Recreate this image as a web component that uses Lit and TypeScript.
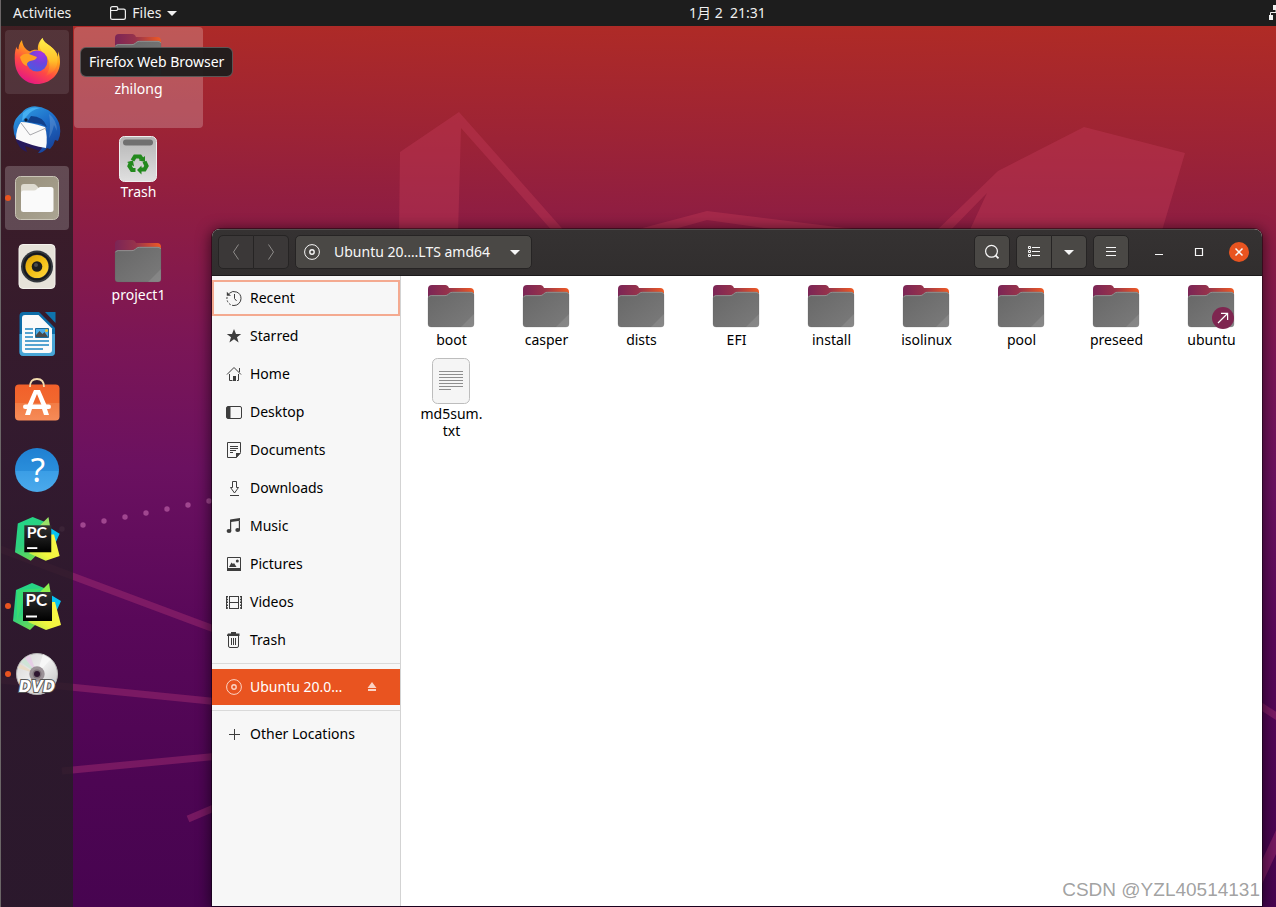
import { LitElement, html, css, svg, SVGTemplateResult } from "lit";
import { customElement, property } from "lit/decorators.js";
import { classMap } from "lit/directives/class-map.js";

/* ---------- symbolic 16px icons ---------- */

const symbolic: Record<string, SVGTemplateResult> = {
  recent: svg`<g fill="none" stroke="currentColor"><path d="M3.2 3.4A7 7 0 0 1 15 8.500 7 7 0 0 1 8 15.500"/><path stroke-dasharray="2 1.500" d="M8 15.500A7 7 0 0 1 1.200 6.500"/><path d="M8.500 4v4.500l2 2.400"/></g><path fill="currentColor" d="M.8 1.800v4H5z"/>`,
  starred: svg`<path fill="currentColor" d="M8 1l2 5h5.200l-4.200 3.200 1.600 5.300L8 11.300l-4.600 3.200L5 9.200.8 6H6z"/>`,
  home: svg`<g fill="none" stroke="currentColor"><path d="M1 8.500l7-7 7 7"/><path d="M3.500 8v6.500h3M12.500 8v6.500h-1.500M13.500 2v4"/></g><path fill="currentColor" d="M7 10h3v5H7z"/>`,
  desktop: svg`<rect x=".5" y="2.500" width="15" height="12" rx="1.500" fill="none" stroke="currentColor"/><path fill="currentColor" d="M1 3h3.500v11H1z"/>`,
  documents: svg`<g fill="none" stroke="currentColor"><path d="M1.500.5h13v10l-4 5h-9z"/><path d="M4 4.500h8M4 6.500h8M4 8.500h6M4 10.500h3"/></g><path fill="currentColor" d="M10 11h5l-5 5z"/>`,
  downloads: svg`<g fill="none" stroke="currentColor"><path d="M6.500 1.500h4v6h2L8.500 13l-4-5.500h2z"/><path d="M4 15.500h9"/></g>`,
  music: svg`<path fill="currentColor" d="M4 1.500L14 0v2.800L5 4zM4 2h1.200v11H4zM12.800 2H14v10h-1.200z"/><ellipse cx="3" cy="13" rx="2.400" ry="2" fill="currentColor"/><ellipse cx="11.700" cy="12" rx="2.400" ry="2" fill="currentColor"/>`,
  pictures: svg`<path fill="none" stroke="currentColor" d="M1.500 1.500h13v12h-13z"/><path fill="currentColor" d="M1 12h14v3H1zM3 11l2.500-4.500L7 8l1-1 2.500 4z"/><circle cx="11.300" cy="5" r="1.500" fill="currentColor"/>`,
  videos: svg`<g fill="none" stroke="currentColor"><path d="M3.500 2v13M12.500 2v13M3 2.500h10M3 8.500h10M3 14.500h10"/><path stroke-width="2" stroke-dasharray="1.500 1.300" d="M1 2v13M15 2v13"/><path d="M.5 2v13M15.500 2v13"/></g>`,
  trash: svg`<path fill="currentColor" d="M5 0h5v1.500h3.500V4H1V3l1-1.500h3z"/><g fill="none" stroke="currentColor"><path d="M2.500 4v10q0 1.500 1.500 1.500h7q1.500 0 1.500-1.500V4"/><path d="M5.500 6v7M7.500 6v7M9.500 6v7"/></g>`,
  disc: svg`<g fill="none" stroke="currentColor"><circle cx="8" cy="8" r="7.400"/><circle cx="8" cy="8" r="2.200" stroke-width="1.400"/></g>`,
  plus: svg`<path fill="none" stroke="currentColor" d="M8.500 3v11M3 8.500h11"/>`,
  eject: svg`<path fill="currentColor" d="M8 3l4.500 6h-9zM4 10h8v2H4z"/>`,
  back: svg`<path fill="none" stroke="currentColor" d="M10.500.5l-5 7.500 5 7.500"/>`,
  forward: svg`<path fill="none" stroke="currentColor" d="M5.500.5l5 7.500-5 7.500"/>`,
  down: svg`<path fill="currentColor" d="M3 6h10l-5 5z"/>`,
  search: svg`<g fill="none" stroke="currentColor" stroke-width="1.200"><circle cx="7.500" cy="7.300" r="5.900"/><path stroke-width="1.800" d="M11.500 11.300l3 3"/></g>`,
  list: svg`<g fill="none" stroke="currentColor"><path d="M2.500 2.500h2v2h-2zM2.500 6.500h2v2h-2zM2.500 10.500h2v2h-2zM6 3.500h8M6 7.500h8M6 11.500h8"/></g>`,
  menu: svg`<path fill="none" stroke="currentColor" d="M3 3.500h10M3 7.500h10M3 11.500h10"/>`,
  minimize: svg`<path fill="currentColor" d="M4 10h8v1H4z"/>`,
  maximize: svg`<path fill="none" stroke="currentColor" stroke-width="1.200" d="M4.500 4.500h7v7h-7z"/>`,
  close: svg`<path fill="none" stroke="currentColor" stroke-width="1.500" d="M4.500 4.500l7 7M11.500 4.500l-7 7"/>`,
  folder: svg`<path fill="none" stroke="currentColor" stroke-width="1.200" d="M.6 12.500v-9Q.6 1.600 2.500 1.600h4q1.200 0 1.200 1.200v1.400h6q1.700 0 1.700 1.700v6.600q0 1.900-1.900 1.900h-11Q.6 14.400.6 12.500zM.6 5.500h6.200l1-1.200"/>`,
  network: svg`<path fill="currentColor" d="M5 0h6v5H5zM1 10h4v5H1zM11 10h4v5h-4z"/><path fill="none" stroke="currentColor" d="M8 4v3.500M2.500 11V7.500h11V11"/>`,
};

const icon = (name: string) =>
  html`<svg class="sym" viewBox="0 0 16 16" aria-hidden="true">${symbolic[name]}</svg>`;

/* ---------- 48px full-colour icons ---------- */

const folderShape = svg`
  <defs>
    <linearGradient id="fb" x1="0" y1="0" x2="1" y2="0"><stop offset="0" stop-color="#7b2556"/><stop offset=".45" stop-color="#97334b"/><stop offset="1" stop-color="#f05a24"/></linearGradient>
    <linearGradient id="ff" x1="0" y1="0" x2="1" y2="1"><stop offset="0" stop-color="#676767"/><stop offset="1" stop-color="#7b7b7b"/></linearGradient>
  </defs>
  <path fill="url(#fb)" d="M1 6q0-4 4-4h13.500q1.800 0 2.700 1.500L22 5h21q4 0 4 4v12H1z"/>
  <path fill="url(#ff)" stroke="#5c5c5c" stroke-opacity=".35" stroke-width=".6" d="M1 15.500q0-3.200 3.200-3.200H18q2 0 3.400-1.300l1-1Q23.500 9 25.500 9H44q3 0 3 3v29q0 3-3 3H4q-3 0-3-3z"/>
  <path fill="none" stroke="#9a9a9a" stroke-width=".8" d="M1.500 14.300q.6-1.700 2.700-1.700H18q2 0 3.400-1.300l1-1q1.100-1 3.100-1H44q2 0 2.700 1.700"/>
  <path fill="#fff" fill-opacity=".1" d="M47 31v10q0 3-3 3H34z"/>`;

const pycharmShape = (bright: boolean) => svg`
  <defs>
    <linearGradient id="pg" x1="0" y1="0" x2=".5" y2="1"><stop offset="0" stop-color="#21d789"/><stop offset=".6" stop-color="${bright ? "#12d9a0" : "#2fd07f"}"/><stop offset="1" stop-color="#6fdc50"/></linearGradient>
    <linearGradient id="py" x1="0" y1="1" x2="1" y2="0"><stop offset="0" stop-color="#a6e84f"/><stop offset=".4" stop-color="#f2f53f"/><stop offset="1" stop-color="#fcf84a"/></linearGradient>
    <linearGradient id="pk" x1="0" y1="0" x2="0" y2="1"><stop offset="0" stop-color="${bright ? "#000" : "#333"}"/><stop offset="1" stop-color="#000"/></linearGradient>
  </defs>
  <path fill="#07c3f2" d="M38 13l10 6-4 9-9 4-17 14-4-4z"/>
  <path fill="url(#pg)" d="M3 8L19 1l12 5 5 4-12 31-7 7L0 39z"/>
  <path fill="${bright ? "#8ff04e" : "#9ae268"}" d="M36 1l2 12H24z"/>
  <path fill="#3fe06a" d="M4 8l28-2-20 8-8 24z" fill-opacity="${bright ? 0.7 : 0}"/>
  <path fill="url(#py)" d="M15 40l18-20 9 0 6 23-15 5z"/>
  <path fill="url(#pk)" d="M10 10h29v29H10z"/>
  <text x="12.500" y="24" class="pc">PC</text>
  <path fill="#fff" d="M13 33.500h11v2H13z"/>`;

const colour: Record<string, SVGTemplateResult> = {
  folder: folderShape,
  link: svg`${folderShape}<circle cx="36" cy="35" r="11" fill="#7e2650"/><path fill="none" stroke="#fff" stroke-width="1.200" d="M31 40l9.500-9.500M34 30.400h6.600v6.600"/>`,
  text: svg`<rect x="5.500" y="1.500" width="37" height="45" rx="5" fill="#f5f5f5" stroke="#bdbdbd"/>
    <path fill="none" stroke="#8e8e8e" d="M12 14.500h24M12 17.500h24M12 20.500h24M12 23.500h24M12 26.500h24M12 29.500h24M12 32.500h12"/>`,
  bin: svg`<defs><linearGradient id="bn" x1="0" y1="0" x2="0" y2="1"><stop offset="0" stop-color="#b5b5b5"/><stop offset="1" stop-color="#e0e0e0"/></linearGradient></defs>
    <rect x="5.500" y="1.500" width="37" height="45" rx="5" fill="url(#bn)" stroke="#efefef"/>
    <rect x="9" y="4.500" width="30" height="6" rx="3" fill="#707070"/>
    <g fill="none" stroke="#23891d" stroke-width="4.200"><path d="M18.500 25.500l2.500-4h5l1.600 2.500"/><path d="M30.500 26.500l2 4.500-2 3.500H26"/><path d="M21.500 35H18l-2.500-4 1.300-3"/></g>
    <path fill="#23891d" d="M31 21v6l-6-1.500zM27.500 30.500v9L23 35zM13 27l6-1.500 1 6z"/>`,
  firefox: svg`<defs>
      <linearGradient id="fx" x1=".85" y1="0" x2=".3" y2="1"><stop offset=".05" stop-color="#fff44f"/><stop offset=".38" stop-color="#ffa01a"/><stop offset=".66" stop-color="#ff4a44"/><stop offset="1" stop-color="#e31587"/></linearGradient>
      <linearGradient id="fy" x1=".5" y1="0" x2=".5" y2="1"><stop offset="0" stop-color="#fff24a"/><stop offset=".6" stop-color="#ffc02a" /><stop offset="1" stop-color="#ff7a2a" stop-opacity=".2"/></linearGradient>
      <radialGradient id="fp" cx=".7" cy=".15" r=".9"><stop offset="0" stop-color="#a833e1"/><stop offset=".5" stop-color="#7043dd"/><stop offset="1" stop-color="#4a5be0"/></radialGradient>
    </defs>
    <path fill="url(#fx)" d="M29.500 0C25.500 4 24.500 8 25 12c-3-.5-6 0-8 1.500C13 12 9.500 8 9 2 6.500 5 5.500 8.500 5.500 11.500 4 11 3.500 9.500 3.500 8.500 1.500 13 1.500 19 2 25c1 12 10.500 21 22 21 13 0 23-9.500 23-22 0-4-.6-7-2-10.500L45 19c-1-5-4-8-8-11-4-2.800-6.800-4.500-7.500-8z"/>
    <path fill="url(#fy)" d="M29.500 0c.7 3.500 3.500 5.200 7.500 8 4 3 7 7 7.500 13 .6 9-5 15-12 17 6-7 5-18-2-23-4-3-6-9-1-15z"/>
    <circle cx="24" cy="23" r="10.500" fill="url(#fp)"/>
    <path fill="#ff9f22" d="M7 19c2-3 6-4 9-3l8 3c-1 3-4 3.500-7 4-3 1-3.500 3-3 5-4-1-6-5-7-9z"/>`,
  thunderbird: svg`<defs><linearGradient id="tb" x1=".2" y1="0" x2=".8" y2="1"><stop offset="0" stop-color="#2f9be0"/><stop offset=".45" stop-color="#1d6cc8"/><stop offset="1" stop-color="#173f96"/></linearGradient></defs>
    <path fill="#261a5c" d="M2 31q3 12 12 15l-2-6 18 6 6-20z"/>
    <path fill="url(#tb)" d="M19 .5Q27-.5 35 4q8 5 11 13 3 10-1 18l-3-1q-1 5-5 9l-3-1q-4 5-9 5 8-7 8-24l-7-3-17-4Q5 22 3 33 0 27 .5 20 1.500 12 9 6.500 12 2 19 .5z"/>
    <path fill="#45aef0" d="M10 7q8-7 17-5-9 2-13 8l-5 5z"/>
    <path fill="#10408c" d="M18 10q12 0 16 11l-6-3-14-2z"/>
    <path fill="#fafafa" d="M8 16q8 0 24 5 3 10 1 21-14-2-30-9 0-11 5-17z"/>
    <path fill="none" stroke="#a8a8ac" d="M8 17l9 12 16-7"/>
    <path fill="#fff" fill-opacity=".16" d="M36 8q8 6 8 17l-3-6q-2 9-5 13 2-14 0-24z"/>
    <circle cx="13" cy="14" r="1.700" fill="#0d1b33"/>`,
  files: svg`<defs><linearGradient id="fl" x1="0" y1="0" x2="1" y2="1"><stop offset="0" stop-color="#978f7b"/><stop offset="1" stop-color="#aaa492"/></linearGradient></defs>
    <rect x="2.500" y="2.500" width="43" height="43" rx="5" fill="url(#fl)" stroke="#c9c4b6"/>
    <path fill="#dedbd0" d="M8 13q0-3 3-3h10q1.500 0 2.500 1.500L25 13v6H8z"/>
    <path fill="#fafafa" d="M8 19q0-2.500 2.500-2.500H21q1.500 0 2.500-1l1-1q1-1.500 2.800-1.500H38q2.500 0 2.500 2.500V36q0 2-2.500 2H10.500Q8 38 8 36z"/>`,
  rhythmbox: svg`<defs><linearGradient id="ry" x1="0" y1="0" x2="1" y2="1"><stop offset="0" stop-color="#dba006"/><stop offset=".5" stop-color="#f3bf16"/><stop offset="1" stop-color="#ffd83e"/></linearGradient></defs>
    <rect x="6" y="2.500" width="36" height="44" rx="4" fill="#e6e2d9" stroke="#f4f2ed"/>
    <circle cx="24" cy="24.500" r="16" fill="#33373d"/><circle cx="24" cy="24.500" r="13" fill="none" stroke="#17191d" stroke-width="2"/>
    <circle cx="24" cy="24.500" r="11.500" fill="url(#ry)"/><circle cx="24" cy="24.500" r="5.300" fill="#1e1e1e"/><circle cx="23" cy="23" r="2" fill="#4b4b4b"/>`,
  writer: svg`<path fill="#0d6da8" d="M10.500 2H26l16 16v24q0 4-4 4H10.500q-4 0-4-4V6q0-4 4-4z"/>
    <path fill="#48a5d6" d="M6.500 24H42v18q0 4-4 4H10.500q-4 0-4-4z"/>
    <path fill="#0f74ad" d="M32 2h10.500v11z"/>
    <path fill="#fafafa" d="M12 5h13.500L39 18.500V40q0 3-3 3H12q-3 0-3-3V8q0-3 3-3z"/>
    <path fill="none" stroke="#1f86c2" stroke-width="1.700" d="M12 19h8M12 23h8M12 27h8M12 31h24M12 35h24M12 39h18"/>
    <path fill="#4badea" stroke="#186b9e" d="M22.500 18.500h13v9h-13z"/><path fill="#4a4a4a" d="M23 27v-2l3.500-4 3 3 2-2 3.500 5z"/><circle cx="33.500" cy="20.500" r="1.500" fill="#f4bf2a"/>`,
  software: svg`<defs><linearGradient id="sw" x1="0" y1="0" x2="0" y2="1"><stop offset="0" stop-color="#f2602a"/><stop offset=".5" stop-color="#f1682f"/><stop offset=".51" stop-color="#f27c45"/><stop offset="1" stop-color="#f68b58"/></linearGradient></defs>
    <rect x="2" y="6.500" width="44.500" height="36" rx="4" fill="url(#sw)"/>
    <path fill="none" stroke="#f2dcae" stroke-width="1.800" d="M17 9Q17 1 24 1t7 8"/>
    <path fill="#fff" d="M21 12h6l6.500 15h-5L24 16l-4.500 11h-5zM14 31h5l-2 6h-5zM29 31h5l2 6h-5z"/><rect x="10" y="26.500" width="28" height="4.500" rx="2.200" fill="#fff"/>`,
  help: svg`<defs><linearGradient id="hp" x1="0" y1="0" x2="0" y2="1"><stop offset="0" stop-color="#1f80d2"/><stop offset=".52" stop-color="#2a8edb"/><stop offset=".53" stop-color="#3b9ee6"/><stop offset="1" stop-color="#4baaec"/></linearGradient></defs>
    <circle cx="24" cy="24" r="22" fill="url(#hp)"/><text x="25" y="36" text-anchor="middle" class="q">?</text>`,
  pycharm: svg`<g transform="translate(2 2) scale(.93)">${pycharmShape(false)}</g>`,
  pycharmRunning: pycharmShape(true),
  dvd: svg`<defs><linearGradient id="dv" x1="0" y1="0" x2="1" y2="1"><stop offset="0" stop-color="#d4d4d4"/><stop offset=".5" stop-color="#eeeeee"/><stop offset="1" stop-color="#bdbdbd"/></linearGradient></defs>
    <circle cx="24" cy="24" r="20.500" fill="url(#dv)" stroke="#b7b7b7"/>
    <path fill="#cfe4d6" d="M24 24L8 12l4-4z"/><path fill="#e6cfe6" d="M24 24L12 8l5-3z"/><path fill="#e9dcc8" d="M24 24L5 18l2-4z"/>
    <path fill="#fff" fill-opacity=".6" d="M24 24l6-20 8 5z"/>
    <circle cx="24" cy="24" r="7.700" fill="#9b9297"/><circle cx="24" cy="24" r="4.500" fill="#7d7279"/><circle cx="24" cy="24" r="3" fill="#2e1630"/>
    <text x="24" y="42" text-anchor="middle" class="dvd">DVD</text>`,
};

const picture = (name: string) =>
  html`<svg class="pic" viewBox="0 0 48 48" aria-hidden="true">${colour[name]}</svg>`;

const iconStyles = css`
  .sym { width: 16px; height: 16px; flex: none; display: block; }
  .pic { width: 48px; height: 48px; flex: none; display: block; }
  .pc { font: 700 17px "Lato", sans-serif; fill: #fff; }
  .q { font: 400 33px "Noto Sans", sans-serif; fill: #fff; }
  .dvd { font: italic 700 15px "DejaVu Sans", sans-serif; fill: #fff; stroke: #555; stroke-width: 2px; paint-order: stroke; }
`;

const buttonReset = css`
  button { margin: 0; padding: 0; border: 0; background: none; color: inherit; font: inherit; cursor: default; }
`;

/* ---------- top bar ---------- */

@customElement("top-bar")
class TopBar extends LitElement {
  static styles = [iconStyles, buttonReset, css`
    :host { display: grid; grid-template-columns: 54% auto 1fr; align-items: center; height: 26px; background: #1d1d1d; color: #f0f0f0; overflow: hidden; }
    .left { display: flex; gap: 39px; padding-left: 13px; }
    .app { display: flex; align-items: center; gap: 6px; }
    .clock { white-space: pre; }
    .status { display: flex; justify-content: flex-end; margin-right: -8px; }
    .small { display: flex; margin-left: -3px; }
  `];
  render() {
    return html`
      <div class="left">
        <button>Activities</button>
        <button class="app">${icon("folder")}<span>Files</span><span class="small">${icon("down")}</span></button>
      </div>
      <button class="clock">1月 2  21:31</button>
      <button class="status" aria-label="Network">${icon("network")}</button>`;
  }
}

/* ---------- dock ---------- */

const launchers = [
  { name: "Firefox Web Browser", icon: "firefox", state: "hover" },
  { name: "Thunderbird Mail", icon: "thunderbird" },
  { name: "Files", icon: "files", state: "focus", running: true },
  { name: "Rhythmbox", icon: "rhythmbox" },
  { name: "LibreOffice Writer", icon: "writer" },
  { name: "Ubuntu Software", icon: "software" },
  { name: "Help", icon: "help" },
  { name: "PyCharm", icon: "pycharm" },
  { name: "PyCharm", icon: "pycharmRunning", running: true },
  { name: "DVD", icon: "dvd", running: true },
];

@customElement("app-dock")
class AppDock extends LitElement {
  static styles = [iconStyles, buttonReset, css`
    :host { display: block; box-sizing: border-box; width: 73px; padding: 4px 4px 4px 5px; background: linear-gradient(rgba(38, 28, 34, 0.8), rgba(38, 28, 38, 0.85)); }
    nav { display: flex; flex-direction: column; gap: 4px; }
    button { position: relative; display: grid; place-items: center; width: 64px; height: 64px; border-radius: 4px; }
    .hover { background: rgba(255, 255, 255, 0.1); }
    .focus { background: rgba(255, 255, 255, 0.2); }
    .running::before { content: ""; position: absolute; left: 0; top: 29px; width: 6px; height: 6px; border-radius: 50%; background: #e95420; }
  `];
  render() {
    return html`<nav aria-label="Dock">${launchers.map((l) => html`
      <button aria-label=${l.name} class=${classMap({ hover: l.state === "hover", focus: l.state === "focus", running: !!l.running })}>${picture(l.icon)}</button>`)}</nav>`;
  }
}

/* ---------- file / desktop item ---------- */

@customElement("file-item")
class FileItem extends LitElement {
  @property() name = "";
  @property() kind = "folder";
  static styles = [iconStyles, buttonReset, css`
    :host { display: block; }
    button { display: flex; flex-direction: column; align-items: center; width: 100%; }
    .pic { margin-right: 2px; }
    .name { line-height: 17px; width: 68px; text-align: center; overflow-wrap: anywhere; }
  `];
  render() {
    const parts = this.name.split(".");
    const label = parts.length > 1 ? html`${parts[0]}.<wbr>${parts[1]}` : this.name;
    return html`<button>${picture(this.kind)}<span class="name">${label}</span></button>`;
  }
}

/* ---------- file manager window ---------- */

const places = [
  ["recent", "Recent"], ["starred", "Starred"], ["home", "Home"], ["desktop", "Desktop"],
  ["documents", "Documents"], ["downloads", "Downloads"], ["music", "Music"],
  ["pictures", "Pictures"], ["videos", "Videos"], ["trash", "Trash"],
];

const files = [
  ["boot", "folder"], ["casper", "folder"], ["dists", "folder"], ["EFI", "folder"], ["install", "folder"],
  ["isolinux", "folder"], ["pool", "folder"], ["preseed", "folder"], ["ubuntu", "link"], ["md5sum.txt", "text"],
];

@customElement("files-window")
class FilesWindow extends LitElement {
  static styles = [iconStyles, buttonReset, css`
    :host { display: flex; flex-direction: column; border-radius: 8px 8px 0 0; overflow: hidden; background: #fff; color: #000; box-shadow: 0 0 0 1px rgba(0, 0, 0, 0.4), 0 2px 14px 2px rgba(0, 0, 0, 0.55); }
    header { display: flex; align-items: center; box-sizing: border-box; height: 47px; padding: 0 13px 1px 6px; background: linear-gradient(#353232, #312e2e); border-top: 1px solid #4f4d4c; border-bottom: 1px solid #1c1a1c; color: #f7f7f7; }
    header button { display: grid; place-items: center; box-sizing: border-box; width: 36px; height: 34px; border: 1px solid #262424; background: #4a4845; }
    .nav button { background: #3b3838; color: #8d8b89; }
    .group { display: flex; }
    .group button:first-child { border-radius: 5px 0 0 5px; }
    .group button:last-child { border-radius: 0 5px 5px 0; }
    .group button + button { border-left: 0; width: 35px; }
    .group button:only-child { border-radius: 5px; }
    header .path { display: flex; align-items: center; width: 237px; margin-left: 6px; padding: 0 8px; border-radius: 5px; }
    .path span { flex: 1; padding-left: 14px; text-align: left; }
    .tools { display: flex; gap: 6px; margin-left: auto; }
    .controls { display: flex; align-items: center; gap: 20px; margin-left: 20px; }
    header .controls button { width: 20px; height: 20px; border: 0; background: none; }
    header .controls .close { border-radius: 50%; background: #e95420; }
    .body { flex: 1; display: flex; min-height: 0; }
    .side { display: flex; flex-direction: column; gap: 2px; box-sizing: border-box; width: 189px; padding-top: 4px; background: #f7f7f7; border-right: 1px solid #d3d3d3; }
    .row { display: flex; align-items: center; gap: 8px; box-sizing: border-box; width: 100%; height: 36px; padding: 0 20px 0 14px; }
    .row .sym { color: #3d3d3d; }
    .row span { flex: 1; text-align: left; }
    .current { box-shadow: inset 0 0 0 2px #f4aa90; }
    .mounted { background: #e95420; color: #fff; }
    .mounted .sym { color: #fbd3c5; }
    hr { width: 100%; height: 1px; margin: 3px 0; border: 0; background: #dadada; }
    .files { flex: 1; display: grid; grid-template-columns: repeat(auto-fill, 95px); align-content: start; gap: 9px 0; padding: 7px 0 0 3px; }
  `];
  render() {
    return html`
      <header>
        <div class="group nav">
          <button aria-label="Back">${icon("back")}</button><button aria-label="Forward">${icon("forward")}</button>
        </div>
        <button class="path">${icon("disc")}<span>Ubuntu 20.…LTS amd64</span>${icon("down")}</button>
        <div class="tools">
          <div class="group"><button aria-label="Search">${icon("search")}</button></div>
          <div class="group"><button aria-label="List view">${icon("list")}</button><button aria-label="View options">${icon("down")}</button></div>
          <div class="group"><button aria-label="Menu">${icon("menu")}</button></div>
        </div>
        <div class="controls">
          <button aria-label="Minimize">${icon("minimize")}</button>
          <button aria-label="Maximize">${icon("maximize")}</button>
          <button class="close" aria-label="Close">${icon("close")}</button>
        </div>
      </header>
      <div class="body">
        <nav class="side" aria-label="Places">
          ${places.map(([id, label]) => html`<button class=${classMap({ row: true, current: id === "recent" })}>${icon(id)}<span>${label}</span></button>`)}
          <hr>
          <button class="row mounted">${icon("disc")}<span>Ubuntu 20.0…</span>${icon("eject")}</button>
          <hr>
          <button class="row">${icon("plus")}<span>Other Locations</span></button>
        </nav>
        <main class="files">${files.map(([name, kind]) => html`<file-item name=${name} kind=${kind}></file-item>`)}</main>
      </div>`;
  }
}

/* ---------- desktop ---------- */

const dots = [[62, 529], [83, 525], [104, 521], [125, 517], [146, 513], [167, 509], [188, 505], [209, 501]];

const wallpaper = html`
  <svg class="wallpaper" viewBox="0 0 1276 907" preserveAspectRatio="none" aria-hidden="true">
    <g fill="#c23a55" fill-opacity=".42">
      <path d="M400 152l59-40 108 122h-12L461 128l-3 106h-59z"/>
      <path d="M620 234l87-23 170 21v2h-70l-100-14-50 14z"/>
      <path d="M933 234L998 171l86-44 101 26-24 81H968l19-41-40 41z"/>
    </g>
    <g fill="none" stroke="#a02c70" stroke-opacity=".5">
      <path stroke-width="7" d="M0 549L230 635M0 680l230 23M62 771l168-16M188 819l40-17M1250 699l40 26"/>
      <path stroke-width="10" d="M1250 898l40-86"/>
    </g>
    <g fill="#b45aa0" fill-opacity=".75">${dots.map(([x, y]) => svg`<circle cx=${x} cy=${y} r="2.700"/>`)}</g>
  </svg>`;

@customElement("app-root")
class AppRoot extends LitElement {
  static styles = css`
    :host { position: relative; display: flex; flex-direction: column; height: 100vh; overflow: hidden; font: 14px/18px "Noto Sans", "Noto Sans CJK SC", sans-serif; background: #46044d; }
    :host::after { content: ""; position: absolute; inset: 0 auto 0 0; width: 1px; background: #6b6667; }
    .screen { position: relative; flex: 1; display: flex; min-height: 0; background: linear-gradient(181deg, #b02b25 0%, #9c2336 14%, #8e1d43 23%, #7b1656 37%, #6b1160 51%, #590859 68%, #4d0553 86%, #470450 100%); }
    .wallpaper { position: absolute; inset: -26px 0 0 0; width: 100%; height: calc(100% + 26px); }
    app-dock { position: relative; }
    .icons { position: relative; display: flex; flex-direction: column; gap: 2px; padding: 1px; color: #fff; text-shadow: 1px 1px 1px #000; }
    .icons file-item { box-sizing: border-box; width: 129px; height: 101px; padding-top: 5px; border-radius: 4px; }
    .icons .selected { background: rgba(255, 255, 255, 0.22); }
    .tooltip { position: absolute; left: 80px; top: 21px; padding: 5px 8px; border: 1px solid rgba(255, 255, 255, 0.25); border-radius: 6px; background: rgba(28, 28, 28, 0.95); color: #fff; }
    files-window { position: absolute; inset: 203px 14px 1px 212px; }
    .mark { position: absolute; right: 16px; bottom: 6px; font: 19px/22px "Liberation Sans", Arial, sans-serif; color: rgba(150, 150, 150, 0.9); text-shadow: 1px 1px 0 #fff; }
  `;
  render() {
    return html`
      <top-bar></top-bar>
      <div class="screen">
        ${wallpaper}
        <app-dock></app-dock>
        <div class="icons">
          <file-item class="selected" name="zhilong"></file-item>
          <file-item name="Trash" kind="bin"></file-item>
          <file-item name="project1"></file-item>
        </div>
        <div class="tooltip" role="tooltip">Firefox Web Browser</div>
        <files-window></files-window>
        <div class="mark">CSDN @YZL40514131</div>
      </div>`;
  }
}
